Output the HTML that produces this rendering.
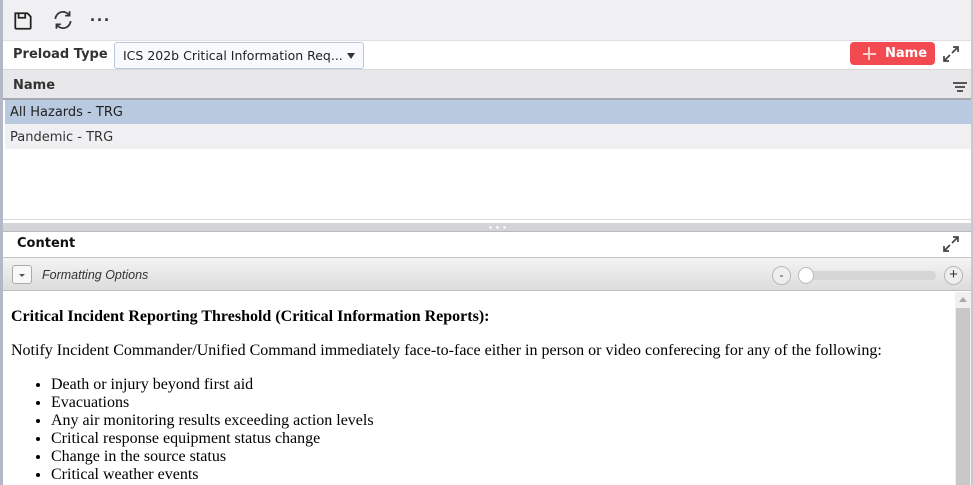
<!DOCTYPE html>
<html><head><style>
*{box-sizing:border-box;margin:0;padding:0}
body{width:973px;height:485px;overflow:hidden;background:#fff;font-family:"Liberation Sans",Arial,sans-serif;position:relative}
.a{position:absolute}
.sans{font-family:"DejaVu Sans","Liberation Sans",sans-serif}
</style></head><body>
<div class="a" style="left:0;top:0;width:973px;height:485px;border-left:3px solid #b4b8c6;border-right:2px solid #c8c8d0"></div>
<div class="a" style="left:3px;top:0;width:968px;height:41px;background:#f0f0f3;border-bottom:1px solid #e0e0e4"></div>
<svg class="a" style="left:12px;top:10px" width="22" height="22" viewBox="0 0 20 20" fill="none" stroke="#222" stroke-width="1.6"><path d="M3 3h11l3 3v10a1 1 0 0 1-1 1H4a1 1 0 0 1-1-1z"/><path d="M6 3v4h6V3"/></svg>
<svg class="a" style="left:51px;top:8px" width="24" height="24" viewBox="0 0 22 22" fill="none" stroke="#333" stroke-width="1.6"><path d="M4 10a7 7 0 0 1 13-3"/><path d="M18 12a7 7 0 0 1-13 3"/><path d="M17 3v4h-4"/><path d="M5 19v-4h4"/></svg>
<div class="a" style="left:90px;top:10px;font-size:18px;font-weight:bold;color:#333;letter-spacing:1px">···</div>
<div class="a sans" style="left:13px;top:47px;font-size:13px;font-weight:bold;color:#333">Preload Type</div>
<div class="a sans" style="left:114px;top:42px;width:250px;height:27px;border:1px solid #b8c8dc;border-radius:3px;background:#f7f9fc;font-size:12.5px;color:#222;padding:5px 0 0 8px">ICS 202b Critical Information Req...</div>
<div class="a" style="left:347px;top:53px;width:0;height:0;border-left:4px solid transparent;border-right:4px solid transparent;border-top:6px solid #333"></div>
<div class="a sans" style="left:850px;top:42px;width:85px;height:23px;background:#f24a50;border-radius:4px;color:#fff;font-size:13px;font-weight:bold;padding:4px 0 0 35px">Name</div>
<div class="a" style="left:863px;top:53px;width:13px;height:2px;background:#fcc"></div>
<div class="a" style="left:868px;top:47px;width:2px;height:13px;background:#fcc"></div>
<svg class="a" style="left:941px;top:44px" width="20" height="20" viewBox="0 0 20 20" fill="none" stroke="#444" stroke-width="1.7"><path d="M11 9l6-6M12 3h5v5M9 11l-6 6M3 12v5h5"/></svg>
<div class="a" style="left:3px;top:69px;width:968px;height:31px;background:#e8e8ea;border-top:1px solid #d8d8dc;border-bottom:2px solid #a6a8b0"></div>
<div class="a sans" style="left:13px;top:78px;font-size:13px;font-weight:bold;color:#333">Name</div>
<div class="a" style="left:953px;top:82px;width:14px;height:2px;background:#555"></div>
<div class="a" style="left:955px;top:86px;width:10px;height:2px;background:#555"></div>
<div class="a" style="left:957px;top:90px;width:6px;height:2px;background:#555"></div>
<div class="a sans" style="left:5px;top:100px;width:966px;height:24px;background:#b9c9df;font-size:13px;color:#222;padding:5px 0 0 5px">All Hazards - TRG</div>
<div class="a sans" style="left:5px;top:124px;width:966px;height:25px;background:#f0f0f2;font-size:13px;color:#333;padding:6px 0 0 5px">Pandemic - TRG</div>
<div class="a" style="left:3px;top:219px;width:968px;height:1px;background:#d8d8dc"></div>
<div class="a" style="left:3px;top:223px;width:968px;height:9px;background:#d4d4d6;border-bottom:1px solid #b8bac0"></div>
<div class="a" style="left:487px;top:226px;width:20px;height:3px;background:radial-gradient(circle,#fff 1px,transparent 1.5px) 0 0/7px 3px"></div>
<div class="a sans" style="left:17px;top:236px;font-size:13px;font-weight:bold;color:#111">Content</div>
<svg class="a" style="left:941px;top:234px" width="20" height="20" viewBox="0 0 20 20" fill="none" stroke="#444" stroke-width="1.7"><path d="M11 9l6-6M12 3h5v5M9 11l-6 6M3 12v5h5"/></svg>
<div class="a" style="left:3px;top:257px;width:968px;height:34px;background:linear-gradient(#f4f4f4,#dcdcdc);border-top:1px solid #c4c4c4;border-bottom:1px solid #c0c0c0"></div>
<div class="a" style="left:12px;top:265px;width:20px;height:19px;border:1px solid #aaa;border-radius:3px;background:#f8f8f8"></div>
<div class="a" style="left:19px;top:274px;width:0;height:0;border-left:3px solid transparent;border-right:3px solid transparent;border-top:3px solid #555"></div>
<div class="a" style="left:42px;top:268px;font-size:12.5px;font-style:italic;color:#333">Formatting Options</div>
<div class="a" style="left:772px;top:266px;width:19px;height:19px;border:1px solid #b8b8b8;border-radius:50%;background:#eee;font-size:12px;text-align:center;line-height:16px;color:#333">-</div>
<div class="a" style="left:800px;top:271px;width:136px;height:9px;border-radius:5px;background:#d6d6d6"></div>
<div class="a" style="left:798px;top:267px;width:16px;height:17px;border:1px solid #bbb;border-radius:50%;background:#fff"></div>
<div class="a" style="left:944px;top:266px;width:19px;height:19px;border:1px solid #b8b8b8;border-radius:50%;background:#eee;font-size:15px;text-align:center;line-height:16px;color:#333">+</div>
<div class="a" style="left:955px;top:292px;width:16px;height:193px;background:#f0f0f0"></div>
<div class="a" style="left:959px;top:297px;width:0;height:0;border-left:4px solid transparent;border-right:4px solid transparent;border-bottom:5px solid #aaa"></div>
<div class="a" style="left:956px;top:308px;width:14px;height:177px;background:#c8c8c8"></div>
<div class="a" style="left:11px;top:307px;width:940px;font-family:'Liberation Serif',serif;font-size:16px;color:#000">
<div style="font-weight:bold;line-height:20px">Critical Incident Reporting Threshold (Critical Information Reports):</div>
<div style="margin-top:14px;line-height:20px">Notify Incident Commander/Unified Command immediately face-to-face either in person or video conferecing for any of the following:</div>
<ul style="margin:15px 0 0 40px;line-height:18px">
<li>Death or injury beyond first aid</li>
<li>Evacuations</li>
<li>Any air monitoring results exceeding action levels</li>
<li>Critical response equipment status change</li>
<li>Change in the source status</li>
<li>Critical weather events</li>
</ul></div>
</body></html>
